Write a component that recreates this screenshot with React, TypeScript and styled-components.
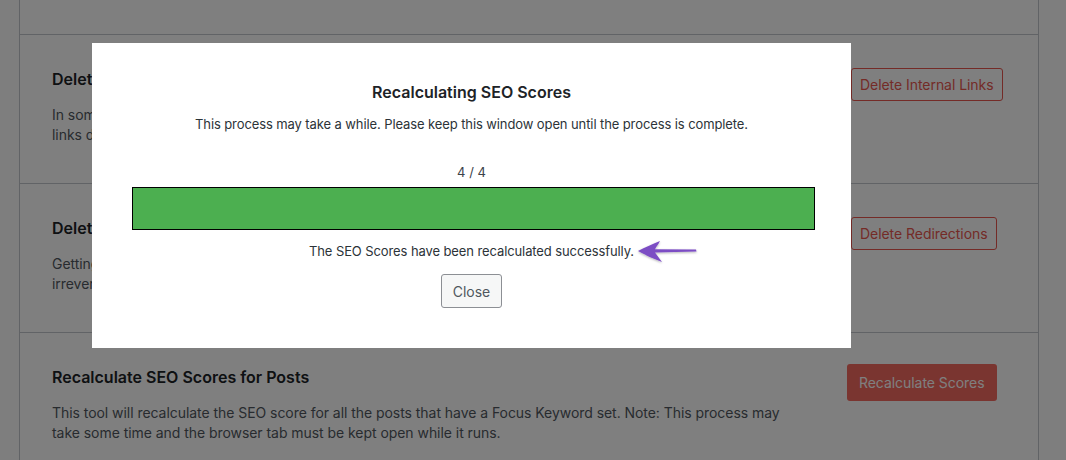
import * as React from 'react'
import styled, { createGlobalStyle } from 'styled-components'

const GlobalStyle = createGlobalStyle`
  html, body {
    margin: 0;
    padding: 0;
    height: 100%;
    overflow: hidden;
    background: #fdfdfd;
    font-family: Inter, "Noto Sans", "Liberation Sans", sans-serif;
  }
  * {
    box-sizing: border-box;
  }
`

const tools = [
  {
    title: 'Delete Internal Links',
    text:
      'In some instances, the internal links data might show an inflated number or no number at all. Deleting the internal links data might fix the issue.',
    action: 'Delete Internal Links',
    primary: false,
  },
  {
    title: 'Delete Redirections',
    text:
      'Getting a fresh start? This option deletes all the redirections you have created. Use with caution as this action is irreversible.',
    action: 'Delete Redirections',
    primary: false,
  },
  {
    title: 'Recalculate SEO Scores for Posts',
    text:
      'This tool will recalculate the SEO score for all the posts that have a Focus Keyword set. Note: This process may take some time and the browser tab must be kept open while it runs.',
    action: 'Recalculate Scores',
    primary: true,
  },
]

const App: React.FunctionComponent = () => {
  return (
    <React.Fragment>
      <GlobalStyle />
      <Page>
        <ToolsCard>
          <RowTail />
          {tools.map((tool, index) => (
            <ToolRow key={index}>
              <ToolInfo>
                <ToolTitle>{tool.title}</ToolTitle>
                <ToolText>{tool.text}</ToolText>
              </ToolInfo>
              <ToolAction>
                {tool.primary ? (
                  <PrimaryButton>{tool.action}</PrimaryButton>
                ) : (
                  <OutlineButton>{tool.action}</OutlineButton>
                )}
              </ToolAction>
            </ToolRow>
          ))}
        </ToolsCard>
      </Page>
      <Overlay>
        <Modal>
          <ModalTitle>Recalculating SEO Scores</ModalTitle>
          <ModalText>
            This process may take a while. Please keep this window open until
            the process is complete.
          </ModalText>
          <Counter>4 / 4</Counter>
          <Progress>
            <ProgressFill style={{ width: `${(4 / 4) * 100}%` }} />
          </Progress>
          <Message>
            The SEO Scores have been recalculated successfully.
            <PointerArrow />
          </Message>
          <CloseButton>Close</CloseButton>
        </Modal>
      </Overlay>
    </React.Fragment>
  )
}

const PointerArrow = () => (
  <ArrowSvg width="62" height="26" viewBox="0 0 62 26">
    <defs>
      <filter id="arrowShadow" x="-10%" y="-20%" width="120%" height="150%">
        <feDropShadow dx="0" dy="1" stdDeviation="0.8" floodColor="#000" floodOpacity="0.3" />
      </filter>
    </defs>
    <path
      d="M2 12 C9 8 17 5 24 2 C22 6 20 8 19 10.2 L60 10.6 L60.5 12.4 L19 13.4 C21 16 23 19 26 23 C18 20 9 16 2 12 Z"
      fill="#7c4dc4"
      filter="url(#arrowShadow)"
    />
  </ArrowSvg>
)

const Page = styled.div`
  padding: 0 27px 0 19px;
`

const ToolsCard = styled.div`
  background: #ffffff;
  border-left: 1px solid #c3c6cc;
  border-right: 1px solid #c3c6cc;
`

const RowTail = styled.div`
  height: 35px;
  border-bottom: 1px solid #c3c6cc;
`

const ToolRow = styled.div`
  display: grid;
  grid-template-columns: minmax(0, 1fr) 155px;
  column-gap: 52px;
  height: 149px;
  padding: 32px 32px 0 32px;
  border-bottom: 1px solid #c3c6cc;
`

const ToolInfo = styled.div`
  display: flex;
  flex-direction: column;
`

const ToolTitle = styled.h3`
  margin: 0;
  font-size: 16px;
  line-height: 24px;
  font-weight: 600;
  color: #1d2327;
`

const ToolText = styled.p`
  margin: 14px 0 0 0;
  font-size: 14px;
  line-height: 20px;
  letter-spacing: -0.05px;
  color: #50575e;
`

const ToolAction = styled.div`
  padding-top: 1px;
`

const OutlineButton = styled.button`
  height: 33px;
  padding: 0 8px;
  border: 1px solid #e8574f;
  border-radius: 3px;
  background: #ffffff;
  color: #e8574f;
  font-family: inherit;
  font-size: 14px;
  letter-spacing: -0.05px;
  white-space: nowrap;
`

const PrimaryButton = styled.button`
  height: 37px;
  margin: -2px 0 0 -4px;
  padding: 0 12px;
  border: none;
  border-radius: 3px;
  background: #f46a60;
  color: #ffffff;
  font-family: inherit;
  font-size: 14px;
  letter-spacing: -0.05px;
  white-space: nowrap;
`

const Overlay = styled.div`
  position: fixed;
  inset: 0;
  background: rgba(0, 0, 0, 0.5);
  display: flex;
  align-items: flex-start;
  padding: 43px 0 0 92px;
`

const Modal = styled.div`
  width: 759px;
  background: #ffffff;
  padding: 38px 40px 40px 40px;
  display: flex;
  flex-direction: column;
  align-items: center;
  text-align: center;
`

const ModalTitle = styled.h2`
  margin: 0;
  font-size: 16px;
  line-height: 22px;
  font-weight: 600;
  color: #1d2327;
`

const ModalText = styled.p`
  margin: 11px 0 0 0;
  font-size: 13px;
  line-height: 20px;
  letter-spacing: -0.1px;
  color: #2c3338;
`

const Counter = styled.div`
  margin-top: 28px;
  font-size: 13px;
  line-height: 20px;
  color: #3c434a;
`

const Progress = styled.div`
  width: 683px;
  height: 43px;
  margin: 5px 0 0 3px;
  border: 1px solid #000000;
  background: #ffffff;
`

const ProgressFill = styled.div`
  height: 100%;
  background: #4caf50;
`

const Message = styled.div`
  position: relative;
  margin-top: 11px;
  font-size: 13px;
  line-height: 20px;
  letter-spacing: -0.1px;
  color: #2c3338;
`

const ArrowSvg = styled.svg`
  position: absolute;
  left: calc(100% + 2px);
  top: -2px;
  overflow: visible;
`

const CloseButton = styled.button`
  margin-top: 13px;
  height: 34px;
  padding: 0 11px;
  border: 1px solid #8c8f94;
  border-radius: 3px;
  background: #f6f7f7;
  color: #50575e;
  font-family: inherit;
  font-size: 14px;
`

export default App
